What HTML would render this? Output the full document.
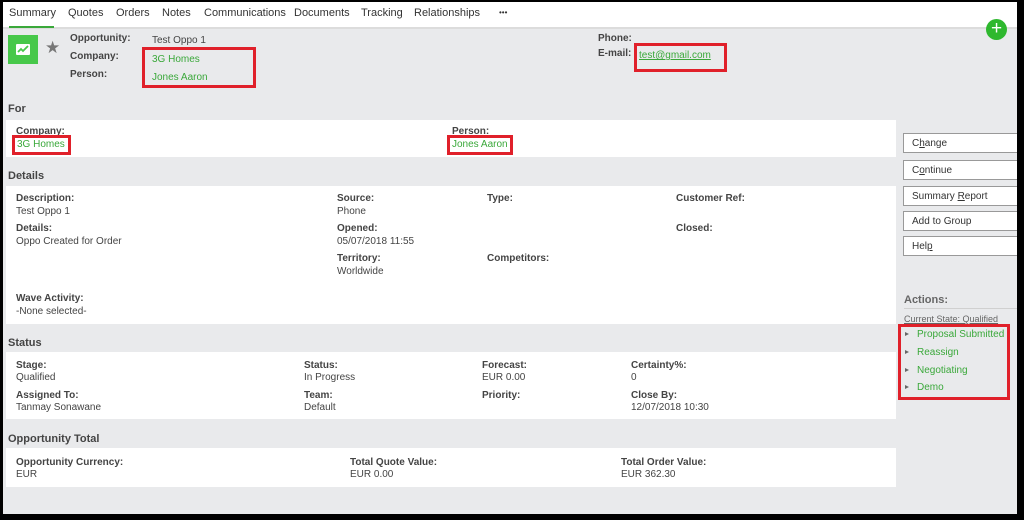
<!DOCTYPE html>
<html><head><meta charset="utf-8"><style>
*{margin:0;padding:0;box-sizing:border-box}
body{width:1024px;height:520px;background:#000;font-family:"Liberation Sans",Arial,sans-serif;font-size:10px;color:#333;overflow:hidden;position:relative}
#app{position:absolute;left:3px;top:2px;width:1014px;height:512px;background:#e9eaec;overflow:hidden}
.a{position:absolute;white-space:nowrap}
.tabs{position:absolute;left:0;top:0;width:1014px;height:27px;background:#fff;border-bottom:2px solid #dcdcdc}
.tab{position:absolute;top:5px;font-size:11px;color:#333}
.p{position:absolute;background:#fff}
.h{position:absolute;font-size:11px;font-weight:bold;color:#444}
.l{position:absolute;font-weight:bold;color:#444;white-space:nowrap}
.v{position:absolute;color:#444;white-space:nowrap}
.g{color:#3aa83a}
.r{position:absolute;border:3px solid #e0202a}
.btn{position:absolute;left:900px;width:120px;height:20px;background:#fff;border:1px solid #999;padding:4px 0 0 8px;color:#333}
.act{position:absolute;left:902px;color:#3aa83a;font-size:10px}
.act:before{content:"";display:inline-block;border-left:4px solid #666;border-top:2.5px solid transparent;border-bottom:2.5px solid transparent;margin-right:8px;vertical-align:1px}
</style></head><body><div id="app">
<div class="tabs">
<span class="tab" style="left:6px">Summary</span>
<div class="a" style="left:6px;top:24px;width:45px;height:2px;background:#3aa83a"></div>
<span class="tab" style="left:65px">Quotes</span>
<span class="tab" style="left:113px">Orders</span>
<span class="tab" style="left:159px">Notes</span>
<span class="tab" style="left:201px">Communications</span>
<span class="tab" style="left:291px">Documents</span>
<span class="tab" style="left:358px">Tracking</span>
<span class="tab" style="left:411px">Relationships</span>
<span class="tab" style="left:496px;font-size:8px;top:6px">•••</span>
</div>
<div class="a" style="left:983px;top:17px;width:21px;height:21px;border-radius:50%;background:#2eb82e;color:#fff;font-size:19px;line-height:20px;text-align:center">+</div>
<div class="a" style="left:5px;top:33px;width:30px;height:29px;background:#47c84a"><svg width="30" height="29"><rect x="8" y="9" width="14" height="11" fill="#fff" rx="1"/><path d="M10 17 L13 14 L15 16 L20 11" stroke="#47c84a" stroke-width="1.8" fill="none"/></svg></div>
<div class="a" style="left:42px;top:36px;font-size:17px;color:#777">★</div>
<div class="l" style="left:67px;top:31px">Opportunity:</div>
<div class="l" style="left:67px;top:49px">Company:</div>
<div class="l" style="left:67px;top:67px">Person:</div>
<div class="v" style="left:149px;top:33px">Test Oppo 1</div>
<div class="v g" style="left:149px;top:52px">3G Homes</div>
<div class="v g" style="left:149px;top:70px">Jones Aaron</div>
<div class="r" style="left:139px;top:45px;width:114px;height:41px"></div>
<div class="l" style="left:595px;top:31px">Phone:</div>
<div class="l" style="left:595px;top:46px">E-mail:</div>
<div class="v g" style="left:636px;top:48px;text-decoration:underline">test@gmail.com</div>
<div class="r" style="left:631px;top:41px;width:93px;height:29px"></div>

<div class="h" style="left:5px;top:101px">For</div>
<div class="p" style="left:3px;top:118px;width:890px;height:37px"></div>
<div class="l" style="left:13px;top:124px">Company:</div>
<div class="v g" style="left:14px;top:137px">3G Homes</div>
<div class="r" style="left:9px;top:133px;width:59px;height:20px"></div>
<div class="l" style="left:449px;top:124px">Person:</div>
<div class="v g" style="left:449px;top:137px">Jones Aaron</div>
<div class="r" style="left:444px;top:133px;width:66px;height:20px"></div>

<div class="h" style="left:5px;top:168px">Details</div>
<div class="p" style="left:3px;top:184px;width:890px;height:138px"></div>
<div class="l" style="left:13px;top:191px">Description:</div><div class="v" style="left:13px;top:204px">Test Oppo 1</div>
<div class="l" style="left:13px;top:221px">Details:</div><div class="v" style="left:13px;top:234px">Oppo Created for Order</div>
<div class="l" style="left:13px;top:291px">Wave Activity:</div><div class="v" style="left:13px;top:304px">-None selected-</div>
<div class="l" style="left:334px;top:191px">Source:</div><div class="v" style="left:334px;top:204px">Phone</div>
<div class="l" style="left:334px;top:221px">Opened:</div><div class="v" style="left:334px;top:234px">05/07/2018 11:55</div>
<div class="l" style="left:334px;top:251px">Territory:</div><div class="v" style="left:334px;top:264px">Worldwide</div>
<div class="l" style="left:484px;top:191px">Type:</div>
<div class="l" style="left:484px;top:251px">Competitors:</div>
<div class="l" style="left:673px;top:191px">Customer Ref:</div>
<div class="l" style="left:673px;top:221px">Closed:</div>

<div class="h" style="left:5px;top:335px">Status</div>
<div class="p" style="left:3px;top:350px;width:890px;height:67px"></div>
<div class="l" style="left:13px;top:358px">Stage:</div><div class="v" style="left:13px;top:370px">Qualified</div>
<div class="l" style="left:13px;top:388px">Assigned To:</div><div class="v" style="left:13px;top:400px">Tanmay Sonawane</div>
<div class="l" style="left:301px;top:358px">Status:</div><div class="v" style="left:301px;top:370px">In Progress</div>
<div class="l" style="left:301px;top:388px">Team:</div><div class="v" style="left:301px;top:400px">Default</div>
<div class="l" style="left:479px;top:358px">Forecast:</div><div class="v" style="left:479px;top:370px">EUR 0.00</div>
<div class="l" style="left:479px;top:388px">Priority:</div>
<div class="l" style="left:628px;top:358px">Certainty%:</div><div class="v" style="left:628px;top:370px">0</div>
<div class="l" style="left:628px;top:388px">Close By:</div><div class="v" style="left:628px;top:400px">12/07/2018 10:30</div>

<div class="h" style="left:5px;top:431px">Opportunity Total</div>
<div class="p" style="left:3px;top:446px;width:890px;height:39px"></div>
<div class="l" style="left:13px;top:455px">Opportunity Currency:</div><div class="v" style="left:13px;top:467px">EUR</div>
<div class="l" style="left:347px;top:455px">Total Quote Value:</div><div class="v" style="left:347px;top:467px">EUR 0.00</div>
<div class="l" style="left:618px;top:455px">Total Order Value:</div><div class="v" style="left:618px;top:467px">EUR 362.30</div>

<div class="btn" style="top:131px">C<u>h</u>ange</div>
<div class="btn" style="top:158px">C<u>o</u>ntinue</div>
<div class="btn" style="top:184px">Summary <u>R</u>eport</div>
<div class="btn" style="top:209px">Add to Group</div>
<div class="btn" style="top:234px">Hel<u>p</u></div>
<div class="a" style="left:901px;top:292px;font-size:11px;font-weight:bold;color:#666">Actions:</div>
<div class="a" style="left:901px;top:306px;width:113px;height:1px;background:#d0d0d0"></div>
<div class="a" style="left:901px;top:312px;font-size:9px;color:#666;text-decoration:underline">Current State: Qualified</div>
<div class="act" style="top:327px">Proposal Submitted</div>
<div class="act" style="top:345px">Reassign</div>
<div class="act" style="top:363px">Negotiating</div>
<div class="act" style="top:380px">Demo</div>
<div class="r" style="left:895px;top:322px;width:112px;height:76px"></div>
</div></body></html>
